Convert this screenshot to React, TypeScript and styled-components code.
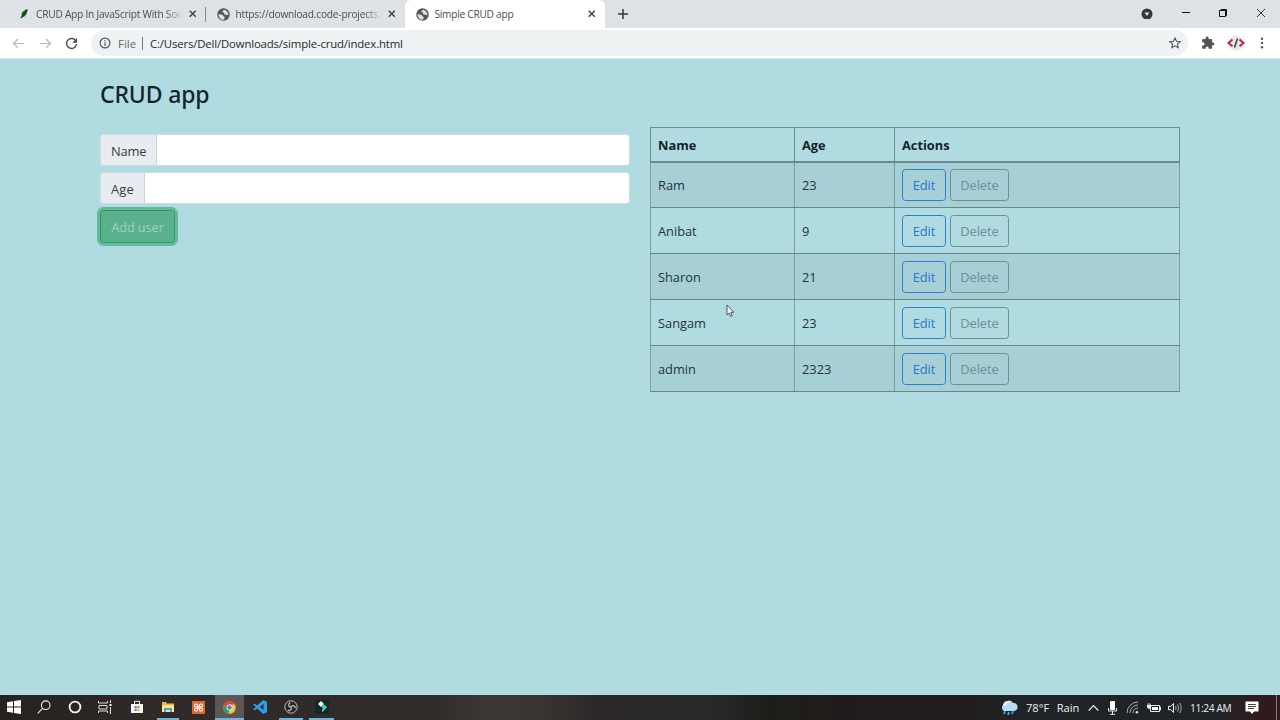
import React from 'react';
import styled, { createGlobalStyle } from 'styled-components';

const GlobalStyle = createGlobalStyle`
  * { box-sizing: border-box; }
  html, body { margin: 0; padding: 0; overflow: hidden; }
  body { font-family: 'Open Sans', 'Noto Sans', sans-serif; background: #b0dbe1; }
`;

const Screen = styled.div`
  position: relative;
  width: 1280px;
  height: 720px;
  display: flex;
  flex-direction: column;
  overflow: hidden;
`;

/* Browser chrome */
const TabStrip = styled.div`
  height: 28px;
  display: flex;
  background: #dee1e5;
  color: #4b4f53;
`;
const Tab = styled.div<{ $width: number; $indent?: number; $active?: boolean; $divider?: boolean }>`
  width: ${p => p.$width}px;
  height: 28px;
  display: flex;
  align-items: center;
  padding: 0 9.5px 0 ${p => p.$indent ?? 10.5}px;
  flex: none;
  position: relative;
  background: ${p => (p.$active ? '#fff' : 'transparent')};
  border-radius: 6px 6px 0 0;
  &::after {
    content: '';
    display: ${p => (p.$divider ? 'block' : 'none')};
    position: absolute;
    right: 0;
    top: 7px;
    width: 1px;
    height: 15px;
    background: #85898d;
  }
`;
const TabTitle = styled.span<{ $spacing: number; $fade?: boolean }>`
  flex: 1 1 0;
  min-width: 0;
  margin-left: 6px;
  margin-right: 6px;
  white-space: nowrap;
  font-size: 10.2px;
  line-height: 16px;
  letter-spacing: ${p => p.$spacing}px;
  ${p => p.$fade && 'mask-image: linear-gradient(to right, #000 88%, transparent 100%);'}
`;
const NewTab = styled.div`
  display: flex;
  align-items: center;
  width: 40px;
  padding-left: 13px;
`;
const WindowControls = styled.div`
  margin-left: auto;
  display: flex;
  align-items: center;
  padding-right: 14px;
  height: 26px;
  gap: 27.6px;
`;
const Toolbar = styled.div`
  height: 31px;
  display: flex;
  align-items: center;
  background: #fff;
  border-bottom: 1px solid #d5edf0;
  padding: 0 12px 0 12px;
`;
const NavIcons = styled.div`
  display: flex;
  gap: 13.5px;
  width: 79px;
`;
const Address = styled.div`
  width: 1097px;
  height: 26px;
  border-radius: 13px;
  background: #eff2f3;
  display: flex;
  align-items: center;
  padding: 0 7px 0 8px;
  font-size: 11.4px;
  color: #26292d;
`;
const Scheme = styled.span`
  margin-left: 7px;
  color: #64686c;
`;
const Bar = styled.i`
  width: 1px;
  height: 13px;
  margin: 0 7px 0 6px;
  background: #777b7f;
`;
const Url = styled.span`
  letter-spacing: -0.17px;
  flex: 1;
`;
const Extensions = styled.div`
  display: flex;
  align-items: center;
  gap: 11.5px;
  margin-left: 13px;
`;
const MenuDots = styled.span`
  display: flex;
  margin-left: 3.5px;
`;

/* Page */
const Page = styled.main`
  height: 636px;
  padding: 20px 100px 0;
  color: #24343a;
`;
const Title = styled.h1`
  margin: 0;
  height: 48px;
  font-family: 'Noto Sans', 'Open Sans', sans-serif;
  font-size: 23px;
  line-height: 31px;
  font-weight: 500;
  letter-spacing: -0.15px;
  color: #12242a;
`;
const Columns = styled.div`
  display: grid;
  grid-template-columns: 530px 530px;
  column-gap: 20px;
`;
const Form = styled.form`
  padding-top: 7px;
`;
const InputGroup = styled.label`
  height: 32px;
  display: flex;
  margin-bottom: 6px;
  border: 1px solid #c9dde3;
  border-radius: 3.5px;
  background: #fff;
  overflow: hidden;
`;
const Prefix = styled.span<{ $width: number; $spacing: number }>`
  width: ${p => p.$width}px;
  padding-left: 10px;
  background: #e8ebef;
  border-right: 1px solid #ced4da;
  font-size: 12.9px;
  line-height: 32px;
  letter-spacing: ${p => p.$spacing}px;
  white-space: nowrap;
  color: #353b40;
`;
const Input = styled.input`
  flex: 1;
  min-width: 0;
  border: 0;
  outline: 0;
  background: transparent;
`;
const AddButton = styled.button`
  width: 75px;
  height: 33px;
  padding: 1px 0 0;
  border: 1px solid #2c9a67;
  border-radius: 3.5px;
  background: #5bb18d;
  box-shadow: 0 0 0 3px #64bb98;
  color: #9dd3bd;
  font: 12.8px/30px 'Open Sans', sans-serif;
  letter-spacing: -0.1px;
`;
const Table = styled.table`
  width: 530px;
  height: 264px;
  table-layout: fixed;
  border-collapse: collapse;
  font-size: 12.8px;
  line-height: 20px;
`;
const Th = styled.th`
  height: 34px;
  padding: 1px 7px 0;
  border: 1px solid #6d8e97;
  border-bottom: 2px solid #6a8891;
  text-align: left;
  font-weight: 700;
  color: #12242a;
`;
const Td = styled.td`
  height: 46px;
  padding: 0 7px;
  border: 1px solid #69868f;
  border-left-color: #7d9ea7;
  border-right-color: #7d9ea7;
`;
const Row = styled.tr<{ $striped: boolean }>`
  background: ${p => (p.$striped ? '#a6d0d6' : 'transparent')};
`;
const Actions = styled.div`
  display: flex;
  gap: 4px;
`;
const ActionButton = styled.button<{ $tone: 'edit' | 'delete' }>`
  width: ${p => (p.$tone === 'edit' ? 44 : 59)}px;
  height: 32px;
  padding: 0;
  border: 1px solid ${p => (p.$tone === 'edit' ? '#2d7fc9' : '#728d96')};
  border-radius: 3.5px;
  background: transparent;
  color: ${p => (p.$tone === 'edit' ? '#2c76d3' : '#728e97')};
  font: 12.9px/30px 'Open Sans', sans-serif;
  letter-spacing: -0.1px;
`;

/* Desktop taskbar */
const Taskbar = styled.footer`
  height: 25px;
  display: flex;
  background: linear-gradient(to right, #24211f 0, #302a28 160px, #302c29 430px, #3d3733 490px, #3a3531 540px, #2c2729 600px, #292a2c 700px, #1d1e1a 770px, #211c1b 840px, #231c1d 960px, #202326 1010px, #202326 1220px, #33191b 1270px, #33191b);
  color: #f0f0f0;
`;
const Apps = styled.div`
  display: flex;
`;
const AppIcon = styled.div<{ $width: number; $state?: 'open' | 'active' }>`
  width: ${p => p.$width}px;
  height: 25px;
  display: flex;
  justify-content: center;
  align-items: center;
  padding-bottom: 1px;
  background: ${p => (p.$state === 'active' ? '#5d5654' : 'transparent')};
  box-shadow: ${p => (p.$state ? 'inset 0 -2px #6bb3e3' : 'none')};
  clip-path: inset(0 ${p => (p.$state === 'open' ? 3 : 0)}px);
`;
const Tray = styled.div`
  margin-left: auto;
  display: flex;
  align-items: center;
  font-size: 11.1px;
`;
const Weather = styled.span`
  display: flex;
  gap: 7.5px;
  margin-left: 8px;
  width: 62px;
`;
const TrayIcons = styled.div`
  display: flex;
  align-items: center;
  gap: 7.2px;
  width: 102px;
`;
const Clock = styled.span`
  width: 55px;
  font-size: 10.2px;
  letter-spacing: -0.35px;
  white-space: nowrap;
`;
const ShowDesktop = styled.i`
  width: 4px;
  height: 25px;
  margin-left: 17px;
  border-left: 1px solid #8a7a7b;
`;
const Pointer = styled.svg`
  position: absolute;
  left: 725.5px;
  top: 304px;
`;

const Drawing = styled.svg`
  flex: none;
`;
const Svg = ({ w, h = w, box, children }: { w: number; h?: number; box?: string; children: React.ReactNode }) => (
  <Drawing width={w} height={h} viewBox={box ?? `0 0 ${w} ${h}`} fill="none">{children}</Drawing>
);
const Globe = () => (
  <Svg w={13} box="0 0 24 24">
    <circle cx="12" cy="12" r="11.5" fill="#54585c" />
    <path d="M3 11c3 2 7 0 8 3 1 3 3 1 3 4 0 2-2 4-3 4C6 21 3 17 3 11zM13 3c-1 1-3 2-3 4 0 1 2 1 3 2 1 2-1 3 2 3 3 0 3 2 6 1 0-5-3-9-8-10z" fill="#dfe2e5" />
  </Svg>
);
const Close = () => (
  <Svg w={7.5} box="0 0 10 10"><path d="M1 1l8 8M9 1L1 9" stroke="#383b3f" strokeWidth="1.8" /></Svg>
);
const Arrow = ({ right }: { right?: boolean }) => (
  <Svg w={13}><path d={right ? 'M1 6.5h10.5M7 2l4.5 4.5L7 11' : 'M12 6.5H1.5M6 2L1.5 6.5 6 11'} stroke="#b4b6b8" strokeWidth="1.1" /></Svg>
);

const people = [
  { name: 'Ram', age: 23 },
  { name: 'Anibat', age: 9 },
  { name: 'Sharon', age: 21 },
  { name: 'Sangam', age: 23 },
  { name: 'admin', age: 2323 },
];

export default function App() {
  return (
    <>
      <GlobalStyle />
      <Screen>
        <TabStrip>
          <Tab $width={206} $divider $indent={18}>
            <Svg w={12} h={12}><path d="M9.5 1C4 3 3 5 3.8 8L2.6 10.5 5 9c3-.5 4.5-4 4.5-8z" fill="#17752b" /><path d="M9 2L3 10" stroke="#172b18" strokeWidth="1.2" /></Svg>
            <TabTitle $spacing={-0.25} $fade>CRUD App In JavaScript With Sou</TabTitle>
            <Close />
          </Tab>
          <Tab $width={199}>
            <Globe />
            <TabTitle $spacing={-0.22} $fade>https://download.code-projects.o</TabTitle>
            <Close />
          </Tab>
          <Tab $width={200} $active>
            <Globe />
            <TabTitle $spacing={-0.28}>Simple CRUD app</TabTitle>
            <Close />
          </Tab>
          <NewTab><Svg w={10}><path d="M5 0v10M0 5h10" stroke="#34373a" strokeWidth="1.5" /></Svg></NewTab>
          <WindowControls>
            <Svg w={12}><circle cx="6" cy="7" r="5.5" fill="#33363a" /><path d="M3.5 5.500h5L6 9z" fill="#dee1e5" /></Svg>
            <Svg w={10}><path d="M1 4.5h8" stroke="#111" /></Svg>
            <Svg w={10}><path d="M1.5 2.5h6v6h-6zM3 2.5v-1h5.5v6h-1" stroke="#111" /></Svg>
            <Svg w={10}><path d="M1 1l8 8M9 1L1 9" stroke="#222" strokeWidth=".9" /></Svg>
          </WindowControls>
        </TabStrip>
        <Toolbar>
          <NavIcons>
            <Arrow /><Arrow right />
            <Svg w={13}><path d="M11 4.2A5 5 0 1 0 11.5 7" stroke="#4b4e52" strokeWidth="1.4" /><path d="M12 1v4.7H7.3z" fill="#4b4e52" /></Svg>
          </NavIcons>
          <Address>
            <Svg w={12}><circle cx="6" cy="6" r="4.9" stroke="#54585c" strokeWidth="1.2" /><path d="M6 5.2V9M6 3v1.2" stroke="#54585c" strokeWidth="1.2" /></Svg>
            <Scheme>File</Scheme><Bar /><Url>C:/Users/Dell/Downloads/simple-crud/index.html</Url>
            <Svg w={12}><path d="M6 1l1.5 3.3 3.6.4-2.7 2.4.8 3.6L6 8.8l-3.2 1.9.8-3.6L.9 4.7l3.6-.4z" stroke="#505458" strokeWidth="1.1" /></Svg>
          </Address>
          <Extensions>
            <Svg w={14} box="0 0 24 24"><path d="M20.5 11H19V7a2 2 0 0 0-2-2h-4V3.5a2.5 2.5 0 0 0-5 0V5H4a2 2 0 0 0-2 2v3.8h1.5a2.7 2.7 0 0 1 0 5.4H2V20a2 2 0 0 0 2 2h3.8v-1.5a2.7 2.7 0 0 1 5.4 0V22H17a2 2 0 0 0 2-2v-4h1.5a2.5 2.5 0 0 0 0-5z" fill="#505458" /></Svg>
            <Svg w={18} h={16}><circle cx="9" cy="8" r="7.8" fill="#e9eaec" /><path d="M5.5 4.5L1.5 8l4 3.3M12.5 4.5l4 3.5-4 3.3" stroke="#c2263d" strokeWidth="2" /><path d="M10.5 3.5l-3 9" stroke="#34545a" strokeWidth="1.7" /></Svg>
            <MenuDots><Svg w={4} h={12}><circle cx="2" cy="1.8" r="1.2" fill="#505458" /><circle cx="2" cy="6" r="1.2" fill="#505458" /><circle cx="2" cy="10.2" r="1.2" fill="#505458" /></Svg></MenuDots>
          </Extensions>
        </Toolbar>

        <Page>
          <Title>CRUD app</Title>
          <Columns>
            <Form>
              <InputGroup><Prefix $width={56} $spacing={-0.2}>Name</Prefix><Input /></InputGroup>
              <InputGroup><Prefix $width={44} $spacing={0.15}>Age</Prefix><Input /></InputGroup>
              <AddButton type="button">Add user</AddButton>
            </Form>
            <Table>
              <colgroup><col width="144" /><col width="100" /><col width="285" /></colgroup>
              <thead><tr><Th>Name</Th><Th>Age</Th><Th>Actions</Th></tr></thead>
              <tbody>
                {people.map((person, i) => (
                  <Row key={person.name} $striped={i % 2 === 0}>
                    <Td>{person.name}</Td>
                    <Td>{person.age}</Td>
                    <Td>
                      <Actions>
                        <ActionButton $tone="edit">Edit</ActionButton>
                        <ActionButton $tone="delete">Delete</ActionButton>
                      </Actions>
                    </Td>
                  </Row>
                ))}
              </tbody>
            </Table>
          </Columns>
        </Page>

        <Taskbar>
          <Apps>
            <AppIcon $width={28}><Svg w={14}><path d="M0 2.2l6-.9v5.3H0zM7 1.1L14 0v6.6H7zM0 7.4h6v5.3l-6-.9zM7 7.4h7V14l-7-1.1z" fill="#fff" /></Svg></AppIcon>
            <AppIcon $width={32}><Svg w={14}><circle cx="8.7" cy="5.2" r="4.3" stroke="#eee" strokeWidth="1.1" /><path d="M5.6 8.4L.7 13.3" stroke="#eee" strokeWidth="1.1" /></Svg></AppIcon>
            <AppIcon $width={29}><Svg w={14}><circle cx="7" cy="7" r="5.4" stroke="#f5f5f5" strokeWidth="1.8" /></Svg></AppIcon>
            <AppIcon $width={31}><Svg w={14}><path d="M.5 1v2h9V1M.5 13v-2h9v2M1 5.5h8v3.5H1zM12.5 0v3M12.5 7v7" stroke="#ddd" /><path d="M11.5 4h2v2h-2z" fill="#fff" /></Svg></AppIcon>
            <AppIcon $width={34}><Svg w={14}><path d="M1 4h12v9H1z" fill="#f5f5f5" /><path d="M4.5 4V1.3h5V4" stroke="#f5f5f5" /><path d="M4.5 6h2.2v2.2H4.5z" fill="#ef5350" /><path d="M7.3 6h2.2v2.2H7.3z" fill="#79b63a" /><path d="M4.5 8.8h2.2V11H4.5z" fill="#3a9be5" /><path d="M7.3 8.8h2.2V11H7.3z" fill="#f5b623" /></Svg></AppIcon>
            <AppIcon $width={28} $state="open"><Svg w={14}><path d="M1 2h4l1 1.5h7V12H1z" fill="#e7b947" /><path d="M1 5h12v7H1z" fill="#ffe28a" /><path d="M3 12V8h8v4H9v-2H5v2z" fill="#45a4dc" /></Svg></AppIcon>
            <AppIcon $width={33}><Svg w={13}><rect width="13" height="13" rx="1" fill="#e0692c" /><rect x="2.6" y="3" width="3" height="3" rx="1.3" stroke="#fff" strokeWidth="1.1" /><rect x="7.4" y="3" width="3" height="3" rx="1.3" stroke="#fff" strokeWidth="1.1" /><rect x="2.6" y="7" width="3" height="3" rx="1.3" stroke="#fff" strokeWidth="1.1" /><rect x="7.4" y="7" width="3" height="3" rx="1.3" stroke="#fff" strokeWidth="1.1" /><path d="M5 5l3 3M8 5L5 8" stroke="#fff" strokeWidth="1.1" /></Svg></AppIcon>
            <AppIcon $width={29} $state="active"><Svg w={13}><circle cx="6.5" cy="6.5" r="6.3" fill="#f7c52e" /><path d="M.9 3.4a6.3 6.3 0 0 1 11.2 0H6.5L4 8z" fill="#e34436" /><path d="M.9 3.4L4 8l2.5 1.5L5.3 12.7A6.3 6.3 0 0 1 .9 3.4z" fill="#27a45b" /><circle cx="6.5" cy="6.5" r="2.9" fill="#fff" /><circle cx="6.5" cy="6.5" r="2.2" fill="#3d80e5" /></Svg></AppIcon>
            <AppIcon $width={32}><Svg w={14}><path d="M10.3 0L14 1.7v10.6L10.3 14 4 8.5l-2.6 2L0 9.5 2.8 7 0 4.5l1.4-1L4 5.5zM10.5 4L6.8 7l3.7 3z" fill="#2b9ee5" fillRule="evenodd" /></Svg></AppIcon>
            <AppIcon $width={30} $state="open"><Svg w={14}><circle cx="7" cy="7" r="6.2" fill="#29292b" stroke="#bbb" /><path d="M7 7C3.8 7 4.3 3.5 6.2 2.6M7 7c1.6-2.7 4.5-.7 4.3 1.3M7 7c1.5 2.8-1.5 4.4-3.2 3.3" stroke="#bbb" strokeWidth="1.3" /></Svg></AppIcon>
            <AppIcon $width={31} $state="open"><Svg w={14}><rect width="14" height="14" rx="2" fill="#12292b" /><path d="M3 4l3-3 3 3-3 3z" fill="#eefaf6" /><path d="M6.5 7L9 4.5 12 7.3l-5 5V9.5l1.5-1z" fill="#49ddb2" /></Svg></AppIcon>
          </Apps>
          <Tray>
            <Svg w={18} h={17}><path d="M4 12a4 4 0 0 1 0-7 5 5 0 0 1 9-1 4 4 0 0 1 1 8z" fill="#b6dcf2" /><path d="M3 6a5 5 0 0 1 8-3c-3 0-5 2-5 4z" fill="#eef8fd" /><path d="M5 12l-1 3M9 13l-1 3M13 12l-1 3" stroke="#3fa3e5" strokeWidth="1.8" /></Svg>
            <Weather><span>78°F</span><span>Rain</span></Weather>
            <TrayIcons>
              <Svg w={11} h={12}><path d="M.7 8.5l4.8-5 4.8 5" stroke="#eee" strokeWidth="1.1" /></Svg>
              <Svg w={13} h={14}><rect x="4" y="0" width="5" height="9" rx="1" fill="#fff" /><path d="M2.5 7v3h8V7M6.5 10v3M4 13.3h5" stroke="#eee" /></Svg>
              <Svg w={13} h={13}><path d="M1 12A11 11 0 0 1 12 1M4 12a8 8 0 0 1 8-8M7 12a5 5 0 0 1 5-5" stroke="#aaa" /><circle cx="11" cy="11.2" r="1.3" fill="#ddd" /></Svg>
              <Svg w={14} h={12}><path d="M3.5 3.5h9v6h-9z" stroke="#eee" /><path d="M5 5h6v3H5z" fill="#fff" /><path d="M13 5h1v3h-1zM0 3h4v2L2.5 6.5H1.5L0 5zM1 1v2M3 1v2" fill="#eee" stroke="#eee" strokeWidth=".6" /></Svg>
              <Svg w={14} h={12}><path d="M.5 4.3H3l2.5-2.8v9L3 7.8H.5z" stroke="#eee" /><path d="M7.5 4q1.3 2 0 4M9.5 2.5q2.4 3.5 0 7M11.5 1q3.4 5 0 10" stroke="#bbb" strokeWidth=".9" /></Svg>
            </TrayIcons>
            <Clock>11:24 AM</Clock>
            <Svg w={14} h={14}><path d="M.5.5h13v10H9L7 13l-2-2.5H.5z" fill="#fff" /><path d="M3 3.5h8M3 5.5h8M3 7.5h6" stroke="#333" strokeWidth=".9" /></Svg>
            <ShowDesktop />
          </Tray>
        </Taskbar>
        <Pointer width="9" height="14" viewBox="0 0 9 14"><path d="M1 1v10l2.2-2 1.5 3.4 1.5-.7L4.8 8.3h3z" fill="#fff" stroke="#26343a" strokeWidth=".8" /></Pointer>
      </Screen>
    </>
  );
}
